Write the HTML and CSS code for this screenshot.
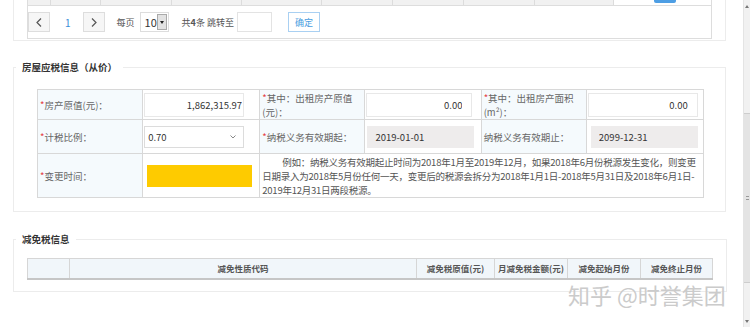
FILE: index.html
```html
<!DOCTYPE html>
<html>
<head>
<meta charset="UTF-8">
<title>房屋应税信息</title>
<link rel="stylesheet" href="styles.css">
</head>
<body>
<div class="page">
	<div class="main">
		<div class="panel pager_panel">
			<div class="list_tail">
				<span></span><span></span><span></span><span></span><span></span><span></span><span></span><span></span><span></span><span><i></i></span>
			</div>
			<div class="pager">
				<a class="pg_btn"><svg width="6" height="9" viewBox="0 0 6 9"><polyline points="5,0.5 1,4.5 5,8.5" fill="none" stroke="#555" stroke-width="1.2"/></svg></a>
				<span class="pg_cur">1</span>
				<a class="pg_btn"><svg width="6" height="9" viewBox="0 0 6 9"><polyline points="1,0.5 5,4.5 1,8.5" fill="none" stroke="#555" stroke-width="1.2"/></svg></a>
				<span class="pg_txt">每页</span>
				<div class="pg_size"><span>10</span><i class="pg_arrow"></i></div>
				<span class="pg_txt pg_total">共<b>4</b>条 跳转至</span>
				<input class="pg_jump" type="text">
				<button class="pg_ok">确定</button>
			</div>
		</div>

		<fieldset class="panel box_tax">
			<legend>房屋应税信息（从价）</legend>
			<table class="form_tb">
				<colgroup><col class="c_lb"><col class="c_val"><col class="c_lb"><col class="c_val2"><col class="c_lb"><col class="c_val"></colgroup>
				<tr class="r1">
					<td class="lb"><em>*</em>房产原值(元)：</td>
					<td class="val"><input class="ipt ipt_num ipt_tight" type="text" value="1,862,315.97"></td>
					<td class="lb"><em>*</em>其中：出租房产原值(元)：</td>
					<td class="val"><input class="ipt ipt_num" type="text" value="0.00"></td>
					<td class="lb"><em>*</em>其中：出租房产面积(m²)：</td>
					<td class="val"><input class="ipt ipt_num ipt_wide" type="text" value="0.00"></td>
				</tr>
				<tr class="r2">
					<td class="lb"><em>*</em>计税比例：</td>
					<td class="val"><div class="sel"><span>0.70</span><svg width="6" height="4" viewBox="0 0 6 4"><polyline points="0.5,0.5 3,3 5.5,0.5" fill="none" stroke="#888" stroke-width="1"/></svg></div></td>
					<td class="lb"><em>*</em>纳税义务有效期起：</td>
					<td class="val"><input class="ipt ipt_ro" type="text" value="2019-01-01" readonly></td>
					<td class="lb">纳税义务有效期止：</td>
					<td class="val"><input class="ipt ipt_ro ipt_ro2" type="text" value="2099-12-31" readonly></td>
				</tr>
				<tr class="r3">
					<td class="lb"><em>*</em>变更时间：</td>
					<td class="val"><div class="mask"></div></td>
					<td class="tip" colspan="4">例如：纳税义务有效期起止时间为2018年1月至2019年12月，如果2018年6月份税源发生变化，则变更日期录入为2018年5月份任何一天，变更后的税源会拆分为2018年1月1日-<wbr>2018年5月31日及2018年6月1日-<wbr>2019年12月31日两段税源。</td>
				</tr>
			</table>
		</fieldset>

		<fieldset class="panel box_jm">
			<legend>减免税信息</legend>
			<table class="list_tb">
				<colgroup><col class="c_no"><col class="c_code"><col class="c_m1"><col class="c_m2"><col class="c_m2"><col class="c_m3"></colgroup>
				<tr>
					<th></th>
					<th>减免性质代码</th>
					<th>减免税原值(元)</th>
					<th>月减免税金额(元)</th>
					<th>减免起始月份</th>
					<th>减免终止月份</th>
				</tr>
			</table>
		</fieldset>

		<div class="watermark">知乎 @时誉集团</div>
	</div>
	<div class="scrollbar">
		<div class="sb_btn"><i class="sb_up"></i></div>
		<div class="sb_track"><div class="sb_thumb"><i></i></div></div>
		<div class="sb_btn"><i class="sb_down"></i></div>
	</div>
</div>
</body>
</html>
```

FILE: styles.css
```css
*{margin:0;padding:0;outline:0;box-sizing:border-box;}
body{background:#fff;color:#666;font-family:"Noto Sans CJK SC","Noto Sans",sans-serif;font-size:9.5px;}
input,button{font-family:inherit;}
.page{display:flex;height:327px;overflow:hidden;}
.main{position:relative;width:743px;}
.panel{margin-left:13px;width:713px;border:1px solid #ececec;}

/* list tail + pager */
.pager_panel{border-top:0;padding:0 13px 1px;}
.list_tail{display:grid;grid-template-columns:23px 50px 71px 70px 80px 71px 71px 71px 79px 1fr;height:5px;border-left:1px solid #ddd;border-right:1px solid #ddd;}
.list_tail span{background:#f1f1f1;border-right:1px solid #dcdcdc;}
.list_tail span:last-child{background:#fff;border-right:0;padding-left:40px;}
.list_tail i{display:block;width:22px;height:3px;background:#4d9ee4;border-radius:0 0 2px 2px;}
.pager{display:flex;align-items:center;height:34px;border:1px solid #ddd;}
.pg_btn{display:flex;align-items:center;justify-content:center;width:22px;height:20px;border:1px solid #ddd;background:#f6f6f6;}
.pg_cur{margin:0 12px 0 15px;color:#3b8ed8;font-size:10px;}
.pg_txt{margin-left:12px;font-size:9px;color:#555;}
.pg_txt b{font-weight:bold;}
.pg_total{margin-left:13px;}
.pg_size{display:flex;align-items:center;justify-content:space-between;width:29px;height:20px;margin-left:5px;padding-left:4px;border:1px solid #ddd;font-size:11px;color:#333;}
.pg_arrow{display:flex;align-items:center;justify-content:center;width:10px;height:16px;margin-right:1px;background:#e2e2e2;border:1px solid #aaa;}
.pg_arrow:after{content:"";border-left:2.5px solid transparent;border-right:2.5px solid transparent;border-top:3px solid #222;}
.pg_jump{width:35px;height:20px;margin-left:3px;border:1px solid #e3e3e3;}
.pg_ok{width:32px;height:20px;margin-left:16px;border:1px solid #a9d0f2;background:#fff;color:#4a9de0;font-size:9px;}

/* fieldset panels */
fieldset.panel{display:block;}
legend{padding:0 6px;line-height:14px;font-weight:bold;color:#333;font-size:9.5px;}
.box_tax{margin-top:19px;padding:15px 21px 13px 23px;}
.box_tax legend{margin-left:-21px;}
.box_jm{margin-top:20px;padding:12px 13px 11px;}
.box_jm legend{margin-left:-11px;}

/* form table */
.form_tb{width:667px;table-layout:fixed;border-collapse:collapse;border:1px solid #cfcfcf;}
.form_tb .c_lb{width:105px;}
.form_tb .c_val{width:117px;}
.form_tb .c_val2{width:116px;}
.form_tb td{border:1px solid #d8d8d8;vertical-align:middle;}
.form_tb .r1{height:30px;}
.form_tb .r2{height:34px;}
.form_tb .r3{height:44px;}
.form_tb .lb{background:#f5fafd;padding:0 2px;line-height:14px;color:#666;}
.form_tb .lb em{font-style:normal;color:#e4393c;}
.form_tb .val{padding:0 0 0 1px;}
.ipt{display:block;height:24px;width:106px;border:1px solid #e8e8e8;background:#fff;color:#333;font-size:9.5px;}
.ipt_num{text-align:right;padding-right:9px;}
.ipt_tight{width:100px;padding-right:1px;}
.ipt_wide{width:110px;}
.ipt_ro{height:22px;width:107px;margin-left:1px;border:0;background:#eeecec;padding-left:8px;}
.ipt_ro2{margin-left:3px;}
.sel{display:flex;align-items:center;justify-content:space-between;width:100px;height:22px;padding:0 7px 0 3px;border:1px solid #dcdcdc;background:#fff;color:#333;}
.mask{width:105px;height:22px;margin-left:3px;background:#fecb00;}
.tip{padding:0 0 0 2px;line-height:14px;text-indent:20px;letter-spacing:-0.25px;color:#555;}

/* list table */
.list_tb{width:685px;table-layout:fixed;border-collapse:collapse;}
.list_tb .c_no{width:42px;}
.list_tb .c_code{width:347px;}
.list_tb .c_m1{width:78px;}
.list_tb .c_m2{width:73px;}
.list_tb .c_m3{width:72px;}
.list_tb th{height:20px;background:#f1f6fa;border:1px solid #d6d6d6;border-bottom:2px solid #c6c6c6;font-size:8.5px;font-weight:bold;color:#555;}

.watermark{position:absolute;left:568px;top:280px;font-size:22px;line-height:28px;color:#cbcbcb;white-space:nowrap;}

/* scrollbar */
.scrollbar{display:flex;flex-direction:column;width:7px;background:#f1f1f1;border-left:1px solid #e4e4e4;}
.sb_btn{display:flex;align-items:center;justify-content:flex-end;height:12px;padding-right:1px;}
.sb_up{border-left:2px solid transparent;border-right:2px solid transparent;border-bottom:3px solid #777;}
.sb_down{border-left:2px solid transparent;border-right:2px solid transparent;border-top:3px solid #777;}
.sb_track{flex:1;}
.sb_thumb{display:flex;align-items:center;justify-content:flex-end;height:170px;margin-top:101px;background:#e4e4e4;border-top:1px solid #cdcdcd;border-bottom:1px solid #cdcdcd;}
.sb_thumb i{width:3px;height:4px;margin-right:1px;border-top:1px solid #999;border-bottom:1px solid #999;}
```
